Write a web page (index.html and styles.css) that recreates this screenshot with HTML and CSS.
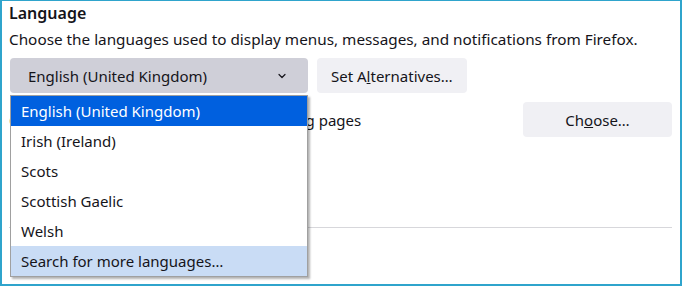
FILE: index.html
```html
<!DOCTYPE html>
<html lang="en">
<head>
    <meta charset="UTF-8">
    <title>Language</title>
    <link rel="stylesheet" href="styles.css">
</head>
<body>
    <div class="pane">
        <h1 class="section-title">Language</h1>
        <p class="section-desc">Choose the languages used to display menus, messages, and notifications from Firefox.</p>

        <div class="row">
            <div class="select-wrap">
                <div class="select open">
                    <span>English (United Kingdom)</span>
                    <svg class="chevron" width="12" height="12" viewBox="0 0 12 12">
                        <path d="M3 4.5 L6 7.5 L9 4.5" fill="none" stroke="#15141a" stroke-width="1.2" stroke-linecap="round" stroke-linejoin="round"/>
                    </svg>
                </div>
                <ul class="popup">
                    <li class="selected">English (United Kingdom)</li>
                    <li>Irish (Ireland)</li>
                    <li>Scots</li>
                    <li>Scottish Gaelic</li>
                    <li>Welsh</li>
                    <li class="hover">Search for more languages…</li>
                </ul>
            </div>
            <button class="btn">Set A<u>l</u>ternatives…</button>
        </div>

        <div class="row spread">
            <span class="label">Choose a preferred language for displaying pages</span>
            <button class="btn">Ch<u>o</u>ose…</button>
        </div>

        <hr class="separator">
    </div>
</body>
</html>
```

FILE: styles.css
```css
* {
    box-sizing: border-box;
}

body {
    margin: 0;
    font-family: "Noto Sans", "Open Sans", sans-serif;
    color: #15141a;
    background: #fff;
}

.pane {
    height: 286px;
    border: 2px solid #2fa4cc;
    border-top-width: 1px;
    padding: 0 8px 0 7px;
    overflow: hidden;
}

.section-title {
    margin: 0;
    font-size: 16px;
    font-weight: 600;
    line-height: 24px;
}

.section-desc {
    margin: 3px 0 0;
    font-size: 15.3px;
    line-height: 22px;
}

.row {
    display: flex;
    align-items: center;
    gap: 9px;
    margin-top: 8px;
    margin-left: 1px;
}

.row.spread {
    justify-content: space-between;
    margin-top: 9px;
    margin-left: 0;
}

.select-wrap {
    position: relative;
}

.select {
    width: 298px;
    height: 35px;
    padding: 0 20px 0 18px;
    display: flex;
    align-items: center;
    justify-content: space-between;
    border-radius: 4px;
    background: #cfcfd8;
    font-size: 15px;
}

.btn {
    height: 35px;
    padding: 0 14px;
    border: none;
    border-radius: 4px;
    background: #f0f0f4;
    color: #15141a;
    font: inherit;
    font-size: 15px;
}

.row.spread .btn {
    width: 149px;
}

.label {
    font-size: 15px;
}

.popup {
    position: absolute;
    top: 37px;
    left: 0;
    width: 298px;
    margin: 0;
    padding: 0;
    list-style: none;
    background: #fff;
    border: 1px solid #a0a0a0;
    box-shadow: 2px 2px 2px rgba(0, 0, 0, 0.3);
    font-size: 15px;
    z-index: 2;
}

.popup li {
    height: 30px;
    line-height: 30px;
    padding: 0 10px;
}

.popup li.selected {
    background: #0060df;
    color: #fff;
}

.popup li.hover {
    background: #c9dcf5;
}

.separator {
    margin: 90px 0 0;
    border: none;
    border-top: 1px solid #d7d7db;
}
```
